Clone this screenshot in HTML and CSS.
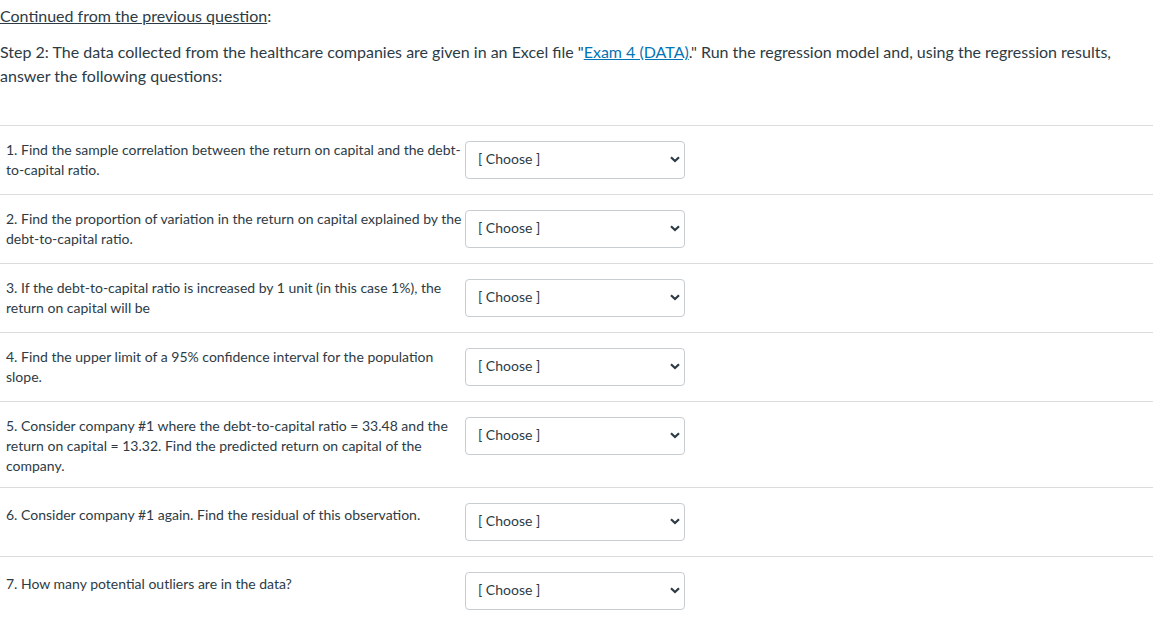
FILE: index.html
```html
<!DOCTYPE html>
<html lang="en">
<head>
    <meta charset="UTF-8">
    <title>Quiz question</title>
    <link rel="stylesheet" href="styles.css">
</head>
<body>
    <div class="question-text">
        <p><span class="underline">Continued from the previous question</span>:</p>
        <p>Step 2: The data collected from the healthcare companies are given in an Excel file "<a href="#">Exam 4 (DATA)</a>." Run the regression model and, using the regression results, answer the following questions:</p>
    </div>

    <div class="answers">
        <div class="answer-row">
            <div class="prompt">1. Find the sample correlation between the return on capital and the debt-to-capital ratio.</div>
            <div class="select-wrap">
                <select><option>[ Choose ]</option></select>
                <svg class="chevron" viewBox="0 0 10 7" width="10" height="7"><path d="M1 1.2 L5 5 L9 1.2" fill="none" stroke="#2d3b45" stroke-width="2.2"/></svg>
            </div>
        </div>
        <div class="answer-row">
            <div class="prompt">2. Find the proportion of variation in the return on capital explained by the debt-to-capital ratio.</div>
            <div class="select-wrap">
                <select><option>[ Choose ]</option></select>
                <svg class="chevron" viewBox="0 0 10 7" width="10" height="7"><path d="M1 1.2 L5 5 L9 1.2" fill="none" stroke="#2d3b45" stroke-width="2.2"/></svg>
            </div>
        </div>
        <div class="answer-row">
            <div class="prompt">3. If the debt-to-capital ratio is increased by 1 unit (in this case 1%), the return on capital will be</div>
            <div class="select-wrap">
                <select><option>[ Choose ]</option></select>
                <svg class="chevron" viewBox="0 0 10 7" width="10" height="7"><path d="M1 1.2 L5 5 L9 1.2" fill="none" stroke="#2d3b45" stroke-width="2.2"/></svg>
            </div>
        </div>
        <div class="answer-row">
            <div class="prompt">4. Find the upper limit of a 95% confidence interval for the population slope.</div>
            <div class="select-wrap">
                <select><option>[ Choose ]</option></select>
                <svg class="chevron" viewBox="0 0 10 7" width="10" height="7"><path d="M1 1.2 L5 5 L9 1.2" fill="none" stroke="#2d3b45" stroke-width="2.2"/></svg>
            </div>
        </div>
        <div class="answer-row">
            <div class="prompt">5. Consider company #1 where the debt-to-capital ratio = 33.48 and the return on capital = 13.32. Find the predicted return on capital of the company.</div>
            <div class="select-wrap">
                <select><option>[ Choose ]</option></select>
                <svg class="chevron" viewBox="0 0 10 7" width="10" height="7"><path d="M1 1.2 L5 5 L9 1.2" fill="none" stroke="#2d3b45" stroke-width="2.2"/></svg>
            </div>
        </div>
        <div class="answer-row">
            <div class="prompt single">6. Consider company #1 again. Find the residual of this observation.</div>
            <div class="select-wrap">
                <select><option>[ Choose ]</option></select>
                <svg class="chevron" viewBox="0 0 10 7" width="10" height="7"><path d="M1 1.2 L5 5 L9 1.2" fill="none" stroke="#2d3b45" stroke-width="2.2"/></svg>
            </div>
        </div>
        <div class="answer-row">
            <div class="prompt single">7. How many potential outliers are in the data?</div>
            <div class="select-wrap">
                <select><option>[ Choose ]</option></select>
                <svg class="chevron" viewBox="0 0 10 7" width="10" height="7"><path d="M1 1.2 L5 5 L9 1.2" fill="none" stroke="#2d3b45" stroke-width="2.2"/></svg>
            </div>
        </div>
    </div>
</body>
</html>
```

FILE: styles.css
```css
body { margin: 0; font-family: Lato, "Open Sans", sans-serif; color: #2d3b45; background: #fff; }

.question-text { font-size: 16px; line-height: 24px; padding: 4px 0 0 0; }
.question-text p { margin: 0 0 12px 0; }
.question-text p:last-child { margin-bottom: 0; }
.question-text a { color: #0374b5; text-decoration: underline; }
.underline { text-decoration: underline; }

.answers { margin-top: 37px; }
.answer-row { display: flex; align-items: flex-start; border-top: 1px solid #dcdcdc; padding: 15px 0 10px 6px; }
.prompt { width: 458px; font-size: 14px; line-height: 20px; margin-top: -1px; padding-bottom: 1px; }
.prompt.single { margin-top: 2px; }

.select-wrap { position: relative; margin-left: 1px; margin-bottom: 5px; }
.select-wrap select {
    appearance: none; -webkit-appearance: none;
    width: 220px; height: 38px; padding: 0 30px 3px 12px;
    border: 1px solid #c7cdd1; border-radius: 4px; background: #fff;
    font-family: Lato, "Open Sans", sans-serif; font-size: 14px; color: #2d3b45;
}
.chevron { position: absolute; right: 5px; top: 15px; pointer-events: none; }
```
